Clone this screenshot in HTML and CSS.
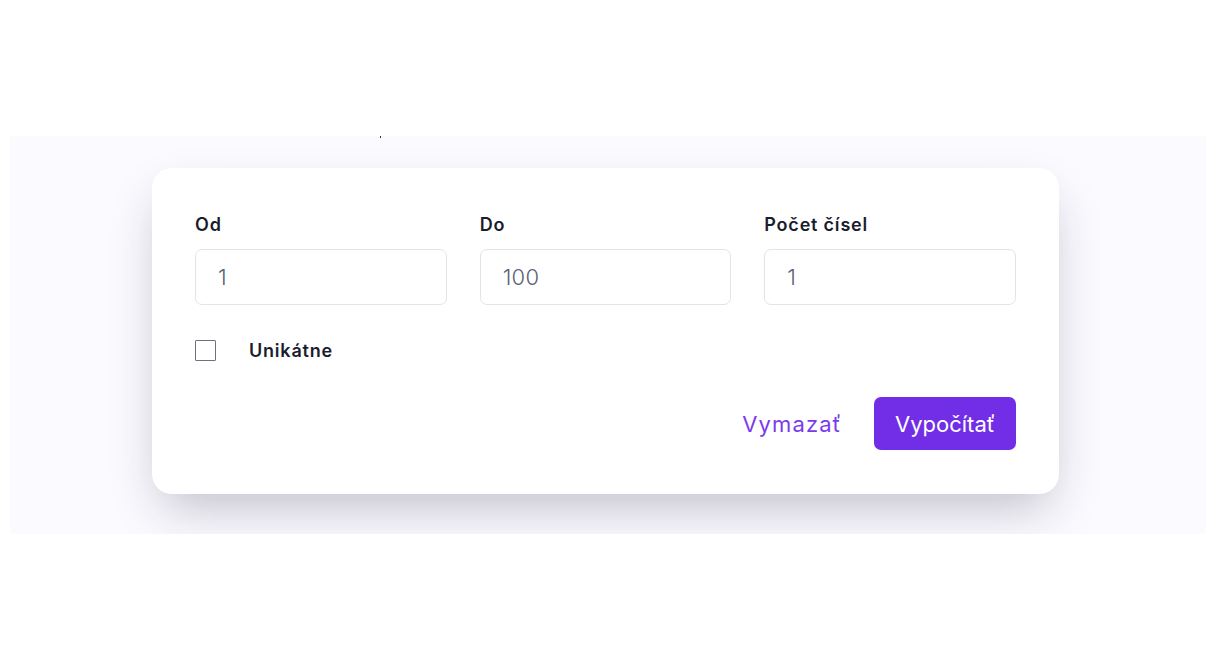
FILE: index.html
```html
<!DOCTYPE html>
<html lang="sk">
<head>
<meta charset="utf-8">
<title>Generátor náhodných čísel</title>
<link rel="stylesheet" href="styles.css">
</head>
<body>
<div class="page">
  <section class="band">
    <span class="dot"></span>
    <form class="card">
      <div class="fields">
        <label class="field">
          <span class="label">Od</span>
          <input class="input" type="text" value="1">
        </label>
        <label class="field">
          <span class="label">Do</span>
          <input class="input" type="text" value="100">
        </label>
        <label class="field">
          <span class="label">Počet čísel</span>
          <input class="input" type="text" value="1">
        </label>
      </div>
      <label class="check">
        <span class="box"></span>
        <span class="check-label">Unikátne</span>
      </label>
      <div class="actions">
        <button type="button" class="btn-link">Vymazať</button>
        <button type="button" class="btn-primary">Vypočítať</button>
      </div>
    </form>
  </section>
</div>
</body>
</html>
```
FILE: styles.css
```css
html, body {
  margin: 0;
  padding: 0;
  background: #ffffff;
}
body {
  font-family: Inter, "Noto Sans", "Liberation Sans", sans-serif;
  color: #1a1f2e;
}
.page {
  padding: 136px 20px 0 10px;
}
.band {
  position: relative;
  height: 398px;
  background: #fbfaff;
  overflow: hidden;
  padding: 32px 0 0 142px;
  box-sizing: border-box;
}
.dot {
  position: absolute;
  left: 370px;
  top: 0;
  width: 1px;
  height: 2px;
  background: #333;
}
.card {
  width: 907px;
  height: 326px;
  box-sizing: border-box;
  background: #ffffff;
  border-radius: 20px;
  box-shadow: 0 22px 50px -10px rgba(30, 30, 50, 0.27);
  padding: 44px 43px 44px 43px;
  display: flex;
  flex-direction: column;
}
.fields {
  display: grid;
  grid-template-columns: repeat(3, 1fr);
  column-gap: 33px;
}
.field {
  display: flex;
  flex-direction: column;
}
.label {
  font-size: 18px;
  font-weight: 600;
  letter-spacing: 0.8px;
  line-height: 26px;
  color: #1a1d2e;
  margin-bottom: 11px;
}
.input {
  height: 56px;
  box-sizing: border-box;
  border: 1px solid #e4e4e7;
  border-radius: 7px;
  padding: 0 22px;
  font-family: Inter, "Noto Sans", sans-serif;
  font-size: 22px;
  font-weight: 300;
  letter-spacing: 0.3px;
  color: #5a6275;
  background: #fff;
  outline: none;
  width: 100%;
}
.check {
  display: flex;
  align-items: center;
  margin-top: 35px;
  height: 21px;
}
.box {
  width: 21px;
  height: 21px;
  box-sizing: border-box;
  border: 1px solid #6b7280;
  border-radius: 1px;
  background: #fff;
}
.check-label {
  margin-left: 33px;
  font-size: 18px;
  font-weight: 600;
  letter-spacing: 0.8px;
  color: #1a1d2e;
}
.actions {
  margin-top: auto;
  display: flex;
  justify-content: flex-end;
  align-items: center;
  gap: 32px;
}
.btn-link {
  border: 0;
  background: none;
  font-family: Inter, "Noto Sans", sans-serif;
  font-size: 22px;
  font-weight: 400;
  letter-spacing: 1.1px;
  color: #7c3aed;
  padding: 0;
  cursor: pointer;
}
.btn-primary {
  height: 53px;
  padding: 0 21px;
  border: 0;
  border-radius: 7px;
  background: #722ee6;
  color: #ffffff;
  font-family: Inter, "Noto Sans", sans-serif;
  font-size: 22px;
  font-weight: 400;
  cursor: pointer;
}
```
